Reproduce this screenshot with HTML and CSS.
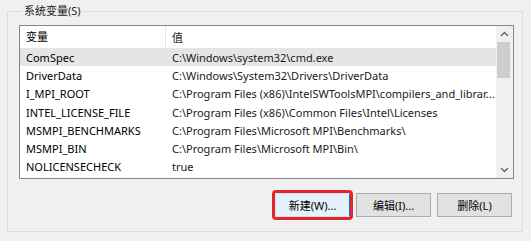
FILE: index.html
```html
<!DOCTYPE html>
<html lang="zh-CN">
<head>
    <meta charset="UTF-8">
    <title>环境变量</title>
    <link rel="stylesheet" href="styles.css">
</head>
<body>
    <fieldset class="group">
        <legend>系统变量(S)</legend>
        <div class="listview">
            <div class="list-body">
                <div class="list-head">
                    <span class="col-name">变量</span>
                    <span class="col-value">值</span>
                </div>
                <div class="row selected">
                    <span class="col-name">ComSpec</span>
                    <span class="col-value">C:\Windows\system32\cmd.exe</span>
                </div>
                <div class="row">
                    <span class="col-name">DriverData</span>
                    <span class="col-value">C:\Windows\System32\Drivers\DriverData</span>
                </div>
                <div class="row">
                    <span class="col-name">I_MPI_ROOT</span>
                    <span class="col-value">C:\Program Files (x86)\IntelSWToolsMPI\compilers_and_librar...</span>
                </div>
                <div class="row">
                    <span class="col-name">INTEL_LICENSE_FILE</span>
                    <span class="col-value">C:\Program Files (x86)\Common Files\Intel\Licenses</span>
                </div>
                <div class="row">
                    <span class="col-name">MSMPI_BENCHMARKS</span>
                    <span class="col-value">C:\Program Files\Microsoft MPI\Benchmarks\</span>
                </div>
                <div class="row">
                    <span class="col-name">MSMPI_BIN</span>
                    <span class="col-value">C:\Program Files\Microsoft MPI\Bin\</span>
                </div>
                <div class="row">
                    <span class="col-name">NOLICENSECHECK</span>
                    <span class="col-value">true</span>
                </div>
            </div>
            <div class="scrollbar">
                <span class="arrow">
                    <svg width="9" height="6" viewBox="0 0 9 6"><polyline points="1,5 4.5,1.5 8,5" fill="none" stroke="#606060" stroke-width="1.3"/></svg>
                </span>
                <span class="thumb"></span>
                <span class="track"></span>
                <span class="arrow">
                    <svg width="9" height="6" viewBox="0 0 9 6"><polyline points="1,1 4.5,4.5 8,1" fill="none" stroke="#606060" stroke-width="1.3"/></svg>
                </span>
            </div>
        </div>
        <div class="buttons">
            <span class="highlight"><button class="default">新建(W)...</button></span>
            <button>编辑(I)...</button>
            <button>删除(L)</button>
        </div>
    </fieldset>
</body>
</html>
```

FILE: styles.css
```css
*{
    box-sizing: border-box;
    font-family: "Noto Sans", "Noto Sans CJK SC", sans-serif;
    font-size: 11px;
}
body{
    margin: 0;
    background-color: #f0f0f0;
    color: #000;
    width: 531px;
    height: 241px;
    overflow: hidden;
}
.group{
    margin: 0 0 0 7px;
    width: 516px;
    min-width: 0;
    border: 1px solid #dcdcdc;
    padding: 0 8px 14px 11px;
}
.group legend{
    margin-left: 3px;
    padding: 0 2px;
    line-height: 22px;
    color: #1a1a1a;
}
.listview{
    margin-top: 3px;
    width: 495px;
    height: 154px;
    border: 1px solid #828790;
    background-color: white;
    display: flex;
}
.list-body{
    flex: 1;
    min-width: 0;
    overflow: hidden;
}
.list-head, .row{
    display: flex;
    align-items: center;
    white-space: nowrap;
}
.list-head{
    height: 22px;
}
.row{
    height: 18.3px;
}
.row.selected{
    background-color: #e5e5e5;
}
.col-name{
    width: 146px;
    flex-shrink: 0;
    padding-left: 6px;
}
.list-head .col-name{
    border-right: 1px solid #e5e5e5;
    line-height: 22px;
}
.col-value{
    padding-left: 6px;
    color: #1a1a1a;
}
.scrollbar{
    width: 17px;
    flex-shrink: 0;
    background-color: #f0f0f0;
    display: flex;
    flex-direction: column;
}
.arrow{
    height: 16px;
    display: flex;
    align-items: center;
    justify-content: center;
}
.thumb{
    margin: 0 3px 0 1px;
    height: 36px;
    background-color: #cdcdcd;
}
.track{
    flex: 1;
}
.buttons{
    margin-top: 14px;
    padding-right: 2px;
    display: flex;
    justify-content: flex-end;
    align-items: center;
    gap: 6px;
}
button{
    width: 75px;
    height: 24px;
    border: 1px solid #adadad;
    background-color: #e1e1e1;
    color: #000;
    padding: 0;
}
button.default{
    border-color: #0078d7;
    border-left-color: #cce4f7;
    border-top-color: #cce4f7;
    border-bottom-color: #cce4f7;
    background-color: #e5f1fb;
}
.highlight{
    display: flex;
    margin: -3px;
    border: 3px solid #e8242b;
    border-radius: 4px;
}
```
